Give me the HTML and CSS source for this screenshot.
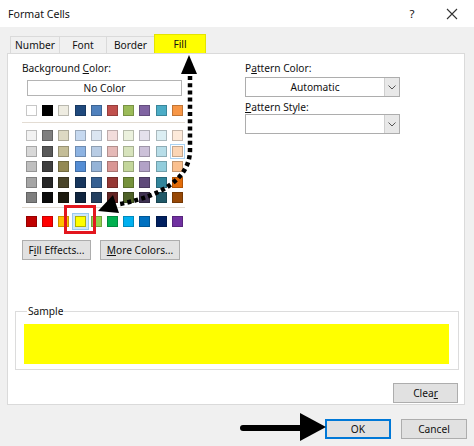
FILE: index.html
```html
<!DOCTYPE html>
<html lang="en">
<head>
    <meta charset="UTF-8">
    <title>Format Cells</title>
    <link rel="stylesheet" href="styles.css">
</head>
<body>
<div class="dialog">

    <!-- Title bar -->
    <div class="titlebar">
        <span class="title">Format Cells</span>
        <span class="help">?</span>
        <span class="close">
            <svg width="12" height="12" viewBox="0 0 12 12"><path d="M1 1 L11 11 M11 1 L1 11" stroke="#333" stroke-width="1.1" fill="none"/></svg>
        </span>
    </div>

    <!-- Tabs -->
    <div class="tabs">
        <div class="tab">Number</div>
        <div class="tab">Font</div>
        <div class="tab">Border</div>
        <div class="tab active">Fill</div>
    </div>

    <div class="panel">
        <div class="top">
            <!-- Background colour -->
            <div class="bg-col">
                <div class="label">Background <u>C</u>olor:</div>
                <div class="no-color">No Color</div>
                <div id="themeRow" class="swatches first"></div>
                <div class="sep"></div>
                <div id="tintRows" class="swatches"></div>
                <div class="sep"></div>
                <div id="standardRow" class="swatches standard"></div>
                <div class="btn-row">
                    <div class="btn fill-effects">F<u>i</u>ll Effects...</div>
                    <div class="btn more-colors"><u>M</u>ore Colors...</div>
                </div>
            </div>

            <!-- Pattern -->
            <div class="pattern-col">
                <div class="label">P<u>a</u>ttern Color:</div>
                <div class="select">
                    <span class="value">Automatic</span>
                    <span class="drop"><svg width="8" height="5" viewBox="0 0 8 5"><path d="M0.5 0.5 L4 4 L7.5 0.5" stroke="#555" fill="none"/></svg></span>
                </div>
                <div class="label second"><u>P</u>attern Style:</div>
                <div class="select">
                    <span class="value"></span>
                    <span class="drop"><svg width="8" height="5" viewBox="0 0 8 5"><path d="M0.5 0.5 L4 4 L7.5 0.5" stroke="#555" fill="none"/></svg></span>
                </div>
            </div>
        </div>

        <fieldset class="sample">
            <legend>Sample</legend>
            <div class="sample-fill"></div>
        </fieldset>

        <div class="clear-row">
            <div class="btn">Clea<u>r</u></div>
        </div>
    </div>

    <div class="footer">
        <div class="btn ok">OK</div>
        <div class="btn">Cancel</div>
    </div>

    <!-- Annotations drawn over the dialog -->
    <svg class="annotations" width="474" height="446" viewBox="0 0 474 446">
        <rect x="65.5" y="206.5" width="29" height="26" fill="none" stroke="#e3161e" stroke-width="3"/>
        <path d="M190 76 L190 150 C190 178 162 196 120 204" fill="none" stroke="#000" stroke-width="4.5" stroke-dasharray="4 3.2"/>
        <polygon points="189,55 181,74 197,74" fill="#000"/>
        <polygon points="98,211 113,195 119,213" fill="#000"/>
        <path d="M243 428 L304 428" stroke="#000" stroke-width="6" stroke-linecap="round"/>
        <polygon points="300,413 326,427 300,441" fill="#000"/>
    </svg>
</div>

<script>
    // Office theme colours
    const theme = ['#ffffff', '#000000', '#eeece1', '#1f497d', '#4f81bd', '#c0504d', '#9bbb59', '#8064a2', '#4bacc6', '#f79646'];
    const tints = [
        ['#f2f2f2', '#7f7f7f', '#ddd9c3', '#c6d9f0', '#dbe5f1', '#f2dcdb', '#ebf1dd', '#e5e0ec', '#dbeef3', '#fdeada'],
        ['#d8d8d8', '#595959', '#c4bd97', '#8db3e2', '#b8cce4', '#e5b9b7', '#d7e3bc', '#ccc1d9', '#b7dde8', '#fbd5b5'],
        ['#bfbfbf', '#3f3f3f', '#938953', '#548dd4', '#95b3d7', '#d99694', '#c3d69b', '#b2a2c7', '#92cddc', '#fac08f'],
        ['#a5a5a5', '#262626', '#494429', '#17365d', '#366092', '#953734', '#76923c', '#5f497a', '#31859b', '#e36c09'],
        ['#7f7f7f', '#0c0c0c', '#1d1b10', '#0f243e', '#244061', '#632423', '#4f6128', '#3f3151', '#205867', '#974806']
    ];
    const standard = ['#c00000', '#ff0000', '#ffc000', '#ffff00', '#92d050', '#00b050', '#00b0f0', '#0070c0', '#002060', '#7030a0'];

    function addSwatches(id, colors, extra) {
        const row = document.getElementById(id);
        colors.forEach((c, i) => {
            const s = document.createElement('span');
            s.className = 'swatch' + (extra[i] ? ' ' + extra[i] : '');
            s.style.background = c;
            row.appendChild(s);
        });
    }

    addSwatches('themeRow', theme, {});
    addSwatches('tintRows', tints.flat(), { 19: 'hover' });
    addSwatches('standardRow', standard, { 3: 'selected' });
</script>
</body>
</html>
```

FILE: styles.css
```css
* {
    box-sizing: border-box;
    margin: 0;
    padding: 0;
}

body {
    font-family: "Noto Sans", "Open Sans", sans-serif;
    font-size: 10.2px;
    color: #111;
    background-color: #f0f0f0;
}

.dialog {
    position: relative;
    width: 474px;
    height: 446px;
    overflow: hidden;
}

/* Title bar */
.titlebar {
    display: flex;
    align-items: center;
    height: 27px;
    padding-left: 8px;
    background-color: #ffffff;
}

.title {
    flex: 1;
    font-size: 10.6px;
}

.help {
    width: 12px;
    margin-right: 28px;
    font-size: 11.5px;
    text-align: center;
}

.close {
    display: flex;
    margin-right: 16px;
}

/* Tabs */
.tabs {
    display: flex;
    align-items: flex-end;
    height: 19px;
    margin-top: 7px;
    padding-left: 10px;
}

.tab {
    height: 17px;
    line-height: 17px;
    text-align: center;
    border: 1px solid #dadada;
    border-bottom: none;
    margin-right: -1px;
}

.tab:nth-child(1) { width: 50px; }
.tab:nth-child(2) { width: 48px; }
.tab:nth-child(3) { width: 49px; }

.tab.active {
    width: 52px;
    height: 19px;
    line-height: 19px;
    background-color: #ffff00;
    border-color: #e4e400;
}

/* Main panel */
.panel {
    width: 458px;
    height: 352px;
    margin-left: 7px;
    background-color: #ffffff;
    border: 1px solid #dadada;
}

.top {
    display: flex;
}

.bg-col {
    width: 237px;
    padding-left: 14px;
}

.label {
    height: 14px;
    line-height: 14px;
    margin-top: 7px;
}

.no-color {
    width: 155px;
    height: 16px;
    margin: 5px 0 0 5px;
    line-height: 14px;
    text-align: center;
    border: 1px solid #b4b4b4;
}

.swatches {
    display: grid;
    grid-template-columns: repeat(10, 11px);
    column-gap: 5.2px;
    row-gap: 4.5px;
    margin-top: 7px;
    padding-left: 4px;
}

.swatches.first {
    margin-top: 9px;
}

.swatches.standard {
    margin-top: 8px;
}

.swatch {
    width: 11px;
    height: 11px;
    box-shadow: inset 0 0 0 1px rgba(0, 0, 0, 0.22);
}

.swatch.hover {
    outline: 1px solid #a9d2f3;
    outline-offset: 1px;
}

.swatch.selected {
    box-shadow: inset 0 0 0 1px rgba(0, 0, 0, 0.3), 0 0 0 2px #cde6fa, 0 0 0 3px #99c9ef;
}

.sep {
    width: 163px;
    height: 1px;
    margin-top: 6px;
    background-color: #e3dcd3;
}

#tintRows + .sep {
    margin-top: 4px;
}

.btn-row {
    display: flex;
    gap: 9px;
    margin-top: 13px;
}

.btn {
    height: 20px;
    line-height: 18px;
    text-align: center;
    background-color: #e1e1e1;
    border: 1px solid #adadad;
}

.fill-effects { width: 69px; }
.more-colors { width: 80px; }

.pattern-col {
    width: 155px;
}

.label.second {
    margin-top: 3px;
}

.select {
    display: flex;
    height: 20px;
    margin-top: 2px;
    border: 1px solid #adadad;
}

.label.second + .select {
    margin-top: 0;
}

.select .value {
    flex: 1;
    line-height: 18px;
    text-align: center;
}

.select .drop {
    display: flex;
    align-items: center;
    justify-content: center;
    width: 15px;
    background-color: #e8e8e8;
    border-left: 1px solid #cfcfcf;
}

/* Sample */
.sample {
    width: 444px;
    margin: 44px 0 0 7px;
    padding: 6px 8px 5px 8px;
    border: 1px solid #dcdcdc;
}

.sample legend {
    height: 14px;
    line-height: 14px;
    margin-left: 3px;
    padding: 0 1px;
}

.sample-fill {
    width: 425px;
    height: 40px;
    background-color: #ffff00;
}

.clear-row {
    display: flex;
    justify-content: flex-end;
    margin: 13px 6px 0 0;
}

.clear-row .btn {
    width: 65px;
}

/* Footer */
.footer {
    display: flex;
    justify-content: flex-end;
    gap: 10px;
    margin: 14px 7px 0 0;
}

.footer .btn {
    width: 66px;
}

.footer .ok {
    border-color: #0078d7;
    box-shadow: inset 0 0 0 1px #0078d7;
}

.annotations {
    position: absolute;
    top: 0;
    left: 0;
    pointer-events: none;
}
```
